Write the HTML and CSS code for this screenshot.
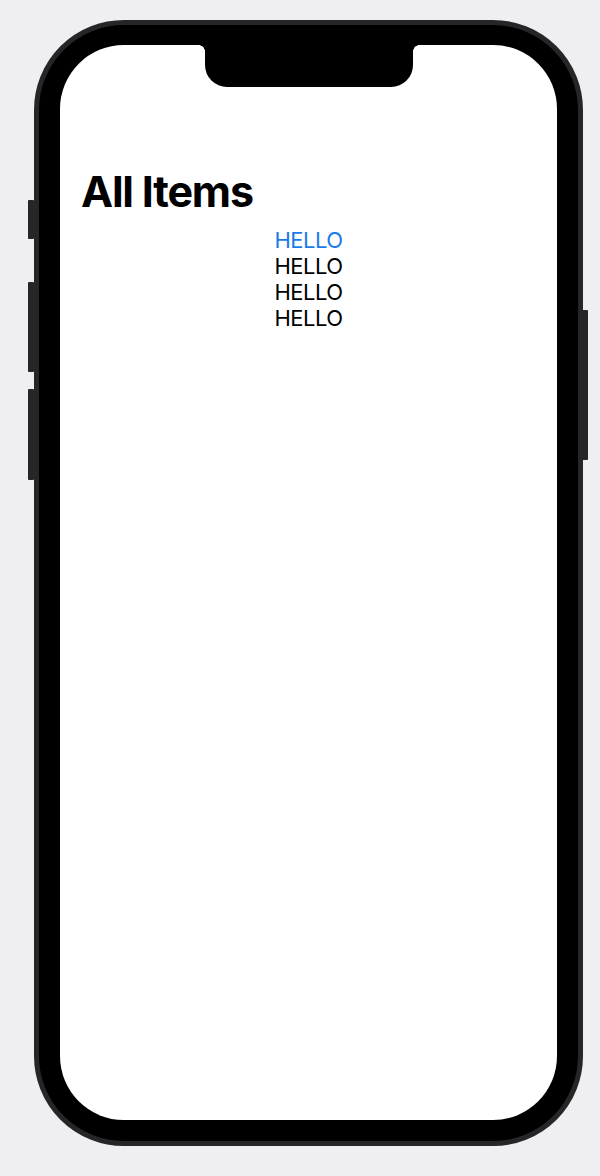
FILE: index.html
```html
<!DOCTYPE html>
<html lang="en">
<head>
<meta charset="utf-8">
<title>All Items</title>
<link rel="stylesheet" href="styles.css">
</head>
<body>
<div class="phone">
  <span class="btn btn-mute"></span>
  <span class="btn btn-vol-up"></span>
  <span class="btn btn-vol-down"></span>
  <span class="btn btn-power"></span>
  <div class="bezel">
    <div class="screen">
      <div class="notch"></div>
      <h1 class="title">All Items</h1>
      <ul class="list">
        <li class="item item-active">HELLO</li>
        <li class="item">HELLO</li>
        <li class="item">HELLO</li>
        <li class="item">HELLO</li>
      </ul>
    </div>
  </div>
</div>
</body>
</html>
```

FILE: styles.css
```css
html, body {
  margin: 0;
  padding: 0;
}
body {
  background: #efeef0;
  width: 600px;
  height: 1176px;
  overflow: hidden;
  font-family: Inter, "Noto Sans", "Liberation Sans", sans-serif;
}
.phone {
  position: relative;
  box-sizing: border-box;
  margin: 20px 0 0 34px;
  width: 549px;
  height: 1126px;
  border: 5px solid #262528;
  border-radius: 90px;
  background: #000;
}
.bezel {
  box-sizing: border-box;
  height: 100%;
  padding: 20px 21px 21px 21px;
}
.screen {
  position: relative;
  box-sizing: border-box;
  height: 100%;
  background: #fff;
  border-radius: 64px;
  padding: 120px 21px 0 21px;
  display: flex;
  flex-direction: column;
}
.notch {
  position: absolute;
  top: 0;
  left: 145px;
  width: 208px;
  height: 42px;
  background: #000;
  border-radius: 0 0 22px 22px;
}
.notch::before,
.notch::after {
  content: "";
  position: absolute;
  top: 0;
  width: 6px;
  height: 6px;
}
.notch::before {
  left: -6px;
  background: radial-gradient(circle at 0 100%, transparent 5.5px, #000 6px);
}
.notch::after {
  right: -6px;
  background: radial-gradient(circle at 100% 100%, transparent 5.5px, #000 6px);
}
.title {
  margin: 0;
  font-size: 43px;
  line-height: 52px;
  font-weight: 700;
  letter-spacing: -1.2px;
  color: #000;
}
.list {
  list-style: none;
  margin: 10px 0 0 0;
  padding: 0;
  display: flex;
  flex-direction: column;
  align-items: center;
}
.item {
  font-size: 22px;
  line-height: 26px;
  font-weight: 400;
  color: #000;
  letter-spacing: -0.5px;
}
.item-active {
  color: #1a7be8;
}
.btn {
  position: absolute;
  width: 6px;
  background: #262528;
  border-radius: 1px;
}
.btn-mute {
  left: -11px;
  top: 175px;
  height: 39px;
}
.btn-vol-up {
  left: -11px;
  top: 257px;
  height: 90px;
}
.btn-vol-down {
  left: -11px;
  top: 364px;
  height: 91px;
}
.btn-power {
  right: -10px;
  top: 285px;
  height: 150px;
}
```
